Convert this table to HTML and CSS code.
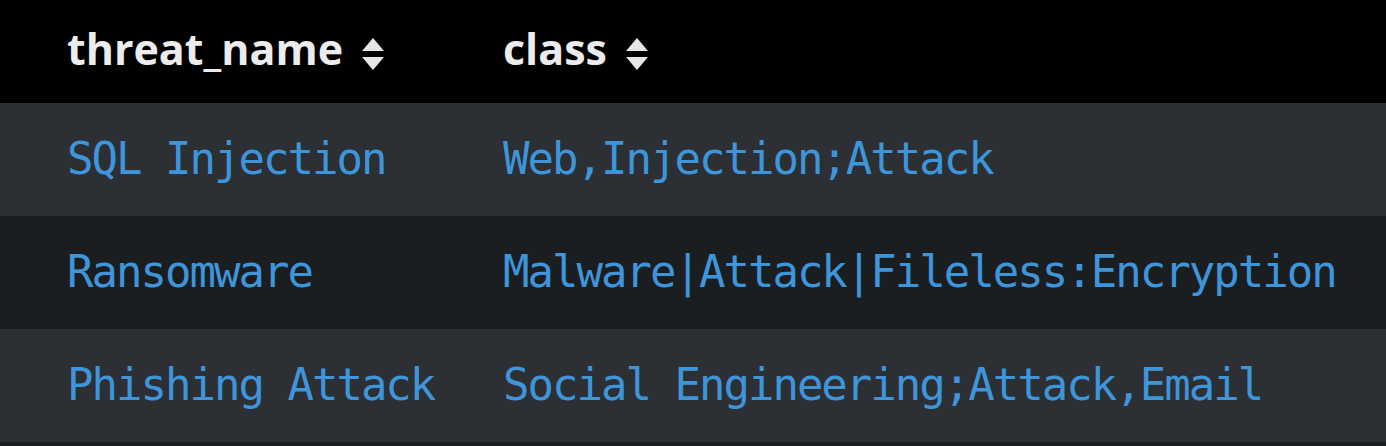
FILE: index.html
```html
<!DOCTYPE html>
<html lang="en">
<head>
  <meta charset="UTF-8" />
  <title>Threats</title>
  <link rel="stylesheet" href="styles.css">
</head>
<body>
  <table class="grid">
    <thead>
      <tr>
        <th>threat_name<span class="sort"><svg viewBox="0 0 24 36" width="24" height="36"><path d="M12 2 L23 15 H1 Z M1 21 H23 L12 34 Z" fill="#e6e6e6"/></svg></span></th>
        <th>class<span class="sort"><svg viewBox="0 0 24 36" width="24" height="36"><path d="M12 2 L23 15 H1 Z M1 21 H23 L12 34 Z" fill="#e6e6e6"/></svg></span></th>
      </tr>
    </thead>
    <tbody>
      <tr><td>SQL Injection</td><td>Web,Injection;Attack</td></tr>
      <tr><td>Ransomware</td><td>Malware|Attack|Fileless:Encryption</td></tr>
      <tr><td>Phishing Attack</td><td>Social Engineering;Attack,Email</td></tr>
      <tr class="tail"><td></td><td></td></tr>
    </tbody>
  </table>
</body>
</html>
```

FILE: styles.css
```css
:root {
  --row-light: #2c2f33;
  --row-dark: #1b1e21;
  --link: #3f95d9;
}
* { margin: 0; padding: 0; box-sizing: border-box; }

body {
  background: var(--row-dark);
  width: 1386px;
  height: 446px;
  overflow: hidden;
}

.grid {
  width: 100%;
  border-collapse: collapse;
}

.grid th {
  height: 103px;
  background: #000;
  color: #ececec;
  font-family: "Open Sans", sans-serif;
  font-weight: 700;
  font-size: 43px;
  letter-spacing: 0;
  text-align: left;
  vertical-align: middle;
  padding: 0 0 6px 67px;
  white-space: nowrap;
}
.grid th:first-child { width: 503px; }
.grid th:last-child { padding-left: 0; }

.sort { display: inline-block; vertical-align: middle; margin-left: 18px; }
.sort svg { display: block; }

.grid td {
  height: 113px;
  color: var(--link);
  font-family: "DejaVu Sans Mono", monospace;
  font-size: 44px;
  letter-spacing: -2px;
  vertical-align: middle;
  padding: 0 0 2px 67px;
  white-space: nowrap;
}
.grid td:last-child { padding-left: 0; }

.grid tbody tr:nth-child(odd) { background: var(--row-light); }
.grid tbody tr:nth-child(even) { background: var(--row-dark); }
.grid tbody tr.tail td { height: 6px; }
```
